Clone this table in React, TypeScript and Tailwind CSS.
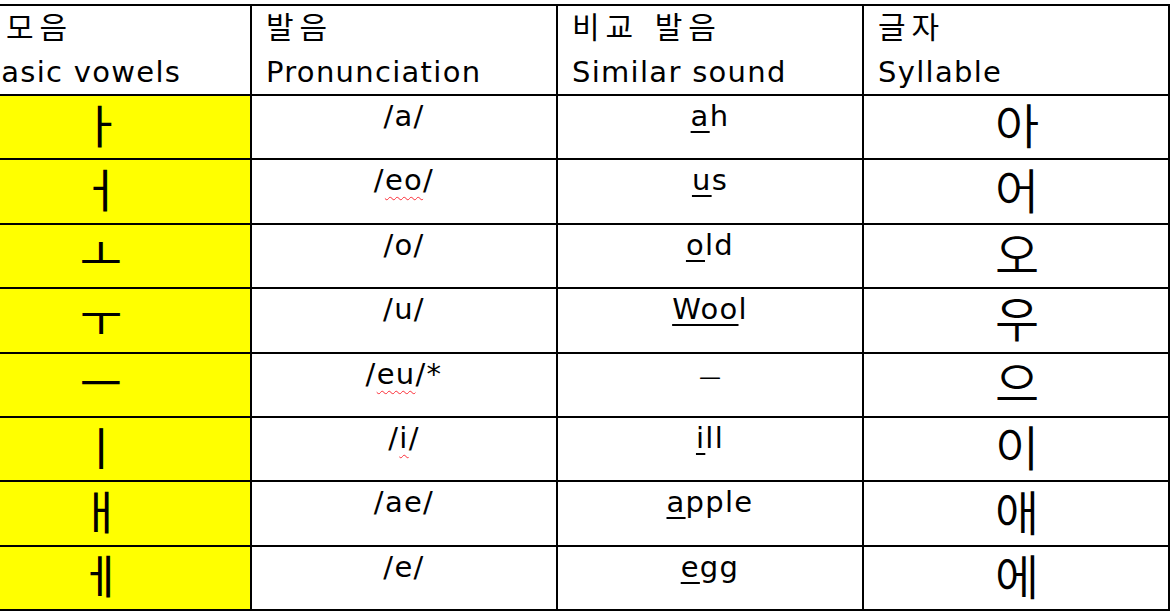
const font = "font-['DejaVu_Sans','Noto_Sans_CJK_KR',sans-serif]"

type Row = {
  vowel: string
  ipa: React.ReactNode
  sound: React.ReactNode
  syllable: string
}

const spell = 'underline decoration-wavy decoration-red-500 decoration-1 underline-offset-[6px]'
const mark = 'underline decoration-2 underline-offset-[5px]'

const rows: Row[] = [
  { vowel: 'ㅏ', ipa: '/a/', sound: <><span className={mark}>a</span>h</>, syllable: '아' },
  { vowel: 'ㅓ', ipa: <>/<span className={spell}>eo</span>/</>, sound: <><span className={mark}>u</span>s</>, syllable: '어' },
  { vowel: 'ㅗ', ipa: '/o/', sound: <><span className={mark}>o</span>ld</>, syllable: '오' },
  { vowel: 'ㅜ', ipa: '/u/', sound: <><span className={mark}>Woo</span>l</>, syllable: '우' },
  { vowel: 'ㅡ', ipa: <>/<span className={spell}>eu</span>/*</>, sound: <span className="text-[22px] tracking-normal">—</span>, syllable: '으' },
  { vowel: 'ㅣ', ipa: <>/<span className={spell}>i</span>/</>, sound: <><span className={mark}>i</span>ll</>, syllable: '이' },
  { vowel: 'ㅐ', ipa: '/ae/', sound: <><span className={mark}>a</span>pple</>, syllable: '애' },
  { vowel: 'ㅔ', ipa: '/e/', sound: <><span className={mark}>e</span>gg</>, syllable: '에' },
]

function Head({ ko, en, first }: { ko: string; en: string; first?: boolean }) {
  return (
    <div className={`border-r-2 border-b-2 border-black text-left leading-[44px] ${first ? 'pl-[34px]' : 'pl-[14px]'}`}>
      <div className={`text-[30px] tracking-[6px] ${first ? 'pl-[26px]' : ''}`}>{ko}</div>
      <div>{en}</div>
    </div>
  )
}

export default function App() {
  return (
    <div className={`h-[615px] w-[1171px] overflow-hidden bg-white text-black ${font}`}>
      <div className="ml-[-54px] mt-[4px] grid w-max grid-cols-[repeat(4,306px)] grid-rows-[90px_repeat(8,64.4px)] border-t-2 border-black text-[29px] font-normal tracking-[1.3px]">
        <Head first ko="모음" en="Basic vowels" />
        <Head ko="발음" en="Pronunciation" />
        <Head ko="비교 발음" en="Similar sound" />
        <Head ko="글자" en="Syllable" />
        {rows.map((r) => (
          <>
            <div key={r.vowel + 'v'} className="flex items-center justify-center border-r-2 border-b-2 border-black bg-[#ffff00] pl-[6px] text-[46px] font-normal tracking-normal">
              {r.vowel}
            </div>
            <div key={r.vowel + 'i'} className="border-r-2 border-b-2 border-black text-center leading-[40px]">
              {r.ipa}
            </div>
            <div key={r.vowel + 's'} className="border-r-2 border-b-2 border-black text-center leading-[40px]">
              {r.sound}
            </div>
            <div key={r.vowel + 'y'} className="flex items-center justify-center border-r-2 border-b-2 border-black pl-[2px] text-[48px] font-[350] tracking-normal">
              {r.syllable}
            </div>
          </>
        ))}
      </div>
    </div>
  )
}
